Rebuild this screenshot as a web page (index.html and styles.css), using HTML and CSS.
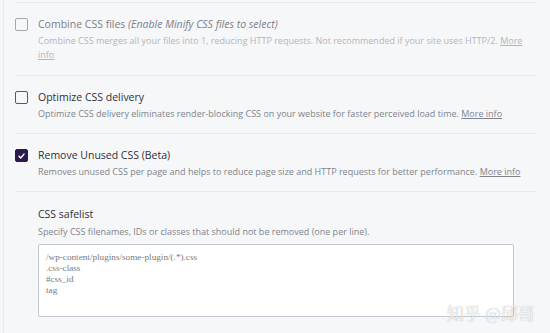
FILE: index.html
```html
<!DOCTYPE html>
<html lang="en">
<head>
    <meta charset="UTF-8">
    <title>File Optimization - CSS</title>
    <link rel="stylesheet" href="styles.css">
</head>
<body>
    <div class="panel">
        <div class="option disabled">
            <span class="box"></span>
            <div class="text">
                <div class="title">Combine CSS files <em>(Enable Minify CSS files to select)</em></div>
                <div class="desc">Combine CSS merges all your files into 1, reducing HTTP requests. Not recommended if your site uses HTTP/2. <a href="#">More info</a></div>
            </div>
        </div>

        <div class="option">
            <span class="box"></span>
            <div class="text">
                <div class="title">Optimize CSS delivery</div>
                <div class="desc">Optimize CSS delivery eliminates render-blocking CSS on your website for faster perceived load time. <a href="#">More info</a></div>
            </div>
        </div>

        <div class="option">
            <span class="box checked">
                <svg viewBox="0 0 14 14" width="14" height="14"><path d="M3.8 7.3 L6 9.6 L10.2 4.6" fill="none" stroke="#fff" stroke-width="1.8" stroke-linecap="round" stroke-linejoin="round"/></svg>
            </span>
            <div class="text">
                <div class="title">Remove Unused CSS (Beta)</div>
                <div class="desc">Removes unused CSS per page and helps to reduce page size and HTTP requests for better performance. <a href="#">More info</a></div>
            </div>
        </div>

        <div class="safelist">
            <div class="title">CSS safelist</div>
            <div class="desc">Specify CSS filenames, IDs or classes that should not be removed (one per line).</div>
            <textarea class="field" spellcheck="false">/wp-content/plugins/some-plugin/(.*).css
.css-class
#css_id
tag</textarea>
        </div>

        <div class="watermark">知乎 @邱哥</div>
    </div>
</body>
</html>
```

FILE: styles.css
```css
body {
    margin: 0;
    background: #f6f7f9;
    font-family: "Open Sans", Lato, sans-serif;
}
.panel {
    position: relative;
    height: 333px;
    margin-left: 3px;
    padding: 2px 14px 0 11px;
    border-left: 1px solid #e8eaed;
    box-sizing: border-box;
}
.option {
    display: flex;
    gap: 10px;
    padding: 14px 0 12px;
    border-top: 1px solid #e9ebee;
}
.option:first-child {
    padding-bottom: 13px;
}
.box {
    flex: none;
    width: 13px;
    height: 13px;
    margin-top: 1px;
    border: 1.5px solid #555a62;
    border-radius: 2px;
    box-sizing: border-box;
    display: flex;
    align-items: center;
    justify-content: center;
}
.box.checked {
    background: #2b1a4b;
    border-color: #2b1a4b;
}
.disabled .box {
    border-color: #a3a8ae;
}
.title {
    font-size: 10.5px;
    line-height: 14px;
    color: #2c3138;
}
.title em {
    font-style: italic;
}
.desc {
    margin-top: 3px;
    font-size: 9px;
    line-height: 14px;
    color: #7e848c;
}
.desc a {
    color: #7e848c;
}
.disabled .title {
    color: #7a8088;
}
.disabled .desc,
.disabled .desc a {
    color: #b2b6bc;
}
.safelist {
    border-top: 1px solid #e9ebee;
    padding: 15px 0 0 23px;
}
.safelist .desc {
    margin-top: 4px;
}
.field {
    display: block;
    width: 476px;
    height: 73px;
    margin-top: 5px;
    padding: 7px 7px;
    box-sizing: border-box;
    border: 1px solid #c4c9d0;
    border-radius: 2px;
    background: #fff;
    font-family: "Liberation Serif", serif;
    font-size: 9.2px;
    line-height: 11px;
    color: #7a7a7a;
    resize: none;
}
.watermark {
    position: absolute;
    right: 15px;
    bottom: 8px;
    font-family: "Noto Sans CJK SC", sans-serif;
    font-size: 17px;
    color: rgba(255, 255, 255, 0.85);
    text-shadow: 0 0 1px rgba(0, 0, 0, 0.35);
}
```
